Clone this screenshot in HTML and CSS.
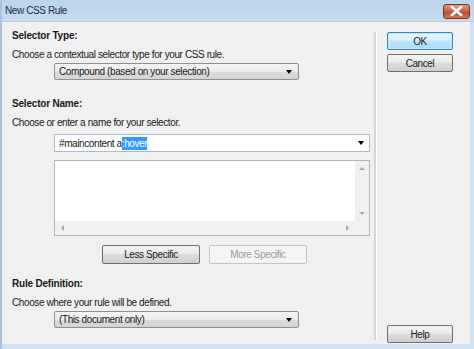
FILE: index.html
```html
<!DOCTYPE html>
<html>
<head>
<meta charset="utf-8">
<link rel="stylesheet" href="styles.css">
</head>
<body>
<div class="window">
  <div class="titlebar">
    <span class="title">New CSS Rule</span>
    <span class="close"><svg width="13" height="10" viewBox="0 0 13 10"><path d="M2 1 L11 9 M11 1 L2 9" stroke="#fff" stroke-width="2.6" stroke-linecap="square"/></svg></span>
  </div>
  <div class="client">
    <div class="main">
      <div class="label">Selector Type:</div>
      <div class="desc">Choose a contextual selector type for your CSS rule.</div>
      <div class="select"><span>Compound (based on your selection)</span><i class="arrow"></i></div>

      <div class="label gap-top">Selector Name:</div>
      <div class="desc">Choose or enter a name for your selector.</div>
      <div class="combo"><span>#maincontent a<span class="sel">:hover</span></span><i class="arrow"></i></div>

      <div class="listbox">
        <div class="lb-area"></div>
        <div class="vscroll"><i class="up"></i><i class="down"></i></div>
        <div class="hscroll"><i class="left"></i><i class="right"></i></div>
        <div class="corner"></div>
      </div>

      <div class="spec-row">
        <div class="btn">Less Specific</div>
        <div class="btn disabled">More Specific</div>
      </div>

      <div class="label gap-top2">Rule Definition:</div>
      <div class="desc">Choose where your rule will be defined.</div>
      <div class="select"><span>(This document only)</span><i class="arrow"></i></div>
    </div>
    <div class="sep"></div>
    <div class="side">
      <div class="btn default">OK</div>
      <div class="btn">Cancel</div>
      <div class="spacer"></div>
      <div class="btn">Help</div>
    </div>
  </div>
</div>
</body>
</html>
```

FILE: styles.css
```css
html, body {
  margin: 0;
  padding: 0;
}
body {
  width: 474px;
  height: 349px;
  overflow: hidden;
  background: #cfe2f3;
  font-family: "Liberation Sans", Arial, sans-serif;
  font-size: 10px;
  letter-spacing: -0.4px;
  color: #1a1a1a;
}
.window {
  width: 474px;
  height: 349px;
  display: flex;
  flex-direction: column;
  box-sizing: border-box;
  border-left: 2px solid #a9c3dd;
}
.titlebar {
  height: 22px;
  flex: none;
  display: flex;
  align-items: center;
  justify-content: space-between;
  background: linear-gradient(#bcd3ea, #c3d8ee 60%, #c8dcef);
  padding: 0 4px 0 3px;
  border-bottom: 1px solid #b6cbe0;
  box-sizing: border-box;
}
.title {
  font-size: 10px;
  color: #1e2a3a;
  letter-spacing: -0.4px;
}
.close {
  width: 27px;
  height: 15px;
  margin-top: 1px;
  border: 1px solid #7a3326;
  border-radius: 3px;
  box-sizing: border-box;
  background: linear-gradient(#dd9a82, #c8603f 50%, #b84a2b 55%, #d47a52);
  display: flex;
  align-items: center;
  justify-content: center;
}
.client {
  flex: 1;
  display: flex;
  background: #f0f0f0;
  margin: 0 4px 5px 0;
  padding-top: 7px;
}
.main {
  width: 372px;
  padding-left: 10px;
  display: flex;
  flex-direction: column;
  align-items: flex-start;
  flex: none;
  box-sizing: border-box;
}
.label {
  font-weight: bold;
  font-size: 10px;
  height: 14px;
  line-height: 14px;
  letter-spacing: -0.2px;
}
.desc {
  height: 14px;
  line-height: 14px;
  margin-top: 5px;
}
.gap-top { margin-top: 17px; }
.gap-top2 { margin-top: 13px; }
.select {
  margin: 1px 0 0 42px;
  width: 245px;
  height: 17px;
  box-sizing: border-box;
  border: 1px solid #8e8f8f;
  border-radius: 2px;
  background: linear-gradient(#f4f4f4, #ebebeb 50%, #dddddd 51%, #d4d4d4);
  display: flex;
  align-items: center;
  justify-content: space-between;
  padding: 0 6px 0 4px;
}
.arrow {
  width: 0;
  height: 0;
  border-left: 3.5px solid transparent;
  border-right: 3.5px solid transparent;
  border-top: 4px solid #000;
}
.combo {
  margin: 4px 0 0 42px;
  width: 316px;
  height: 18px;
  box-sizing: border-box;
  border: 1px solid #a6bdd6;
  background: #fff;
  display: flex;
  align-items: center;
  justify-content: space-between;
  padding: 0 5px 0 4px;
}
.sel {
  background: #3399ff;
  color: #fff;
  padding: 1px 0;
}
.listbox {
  margin: 8px 0 0 42px;
  width: 316px;
  height: 76px;
  box-sizing: border-box;
  border: 1px solid #b5b5b5;
  display: grid;
  grid-template-columns: 1fr 14px;
  grid-template-rows: 1fr 14px;
  background: #fff;
}
.lb-area { background: #fff; }
.vscroll {
  background: #f0f0f0;
  position: relative;
}
.hscroll {
  background: #f0f0f0;
  position: relative;
}
.corner { background: #f0f0f0; }
.vscroll i, .hscroll i {
  position: absolute;
  width: 0;
  height: 0;
}
.vscroll .up {
  top: 6px; left: 4px;
  border-left: 3px solid transparent;
  border-right: 3px solid transparent;
  border-bottom: 3px solid #a8a8a8;
}
.vscroll .down {
  bottom: 6px; left: 4px;
  border-left: 3px solid transparent;
  border-right: 3px solid transparent;
  border-top: 3px solid #a8a8a8;
}
.hscroll .left {
  left: 6px; top: 4px;
  border-top: 3px solid transparent;
  border-bottom: 3px solid transparent;
  border-right: 3px solid #a8a8a8;
}
.hscroll .right {
  right: 6px; top: 4px;
  border-top: 3px solid transparent;
  border-bottom: 3px solid transparent;
  border-left: 3px solid #a8a8a8;
}
.spec-row {
  margin: 9px 0 0 90px;
  display: flex;
  gap: 9px;
}
.btn {
  width: 98px;
  height: 19px;
  box-sizing: border-box;
  border: 1px solid #707070;
  border-radius: 2px;
  background: linear-gradient(#f2f2f2, #ebebeb 45%, #dddddd 50%, #cfcfcf);
  display: flex;
  align-items: center;
  justify-content: center;
  color: #1a1a1a;
}
.btn.disabled {
  border-color: #c4c4c4;
  background: #f4f4f4;
  color: #9a9a9a;
}
.sep {
  width: 2px;
  margin: 3px 0 4px 0;
  background: #d6d6d6;
  border-right: 1px solid #fff;
  flex: none;
}
.side {
  display: flex;
  flex-direction: column;
  padding: 3px 0 0 10px;
  gap: 4px;
  padding-bottom: 1px;
}
.side .btn {
  width: 66px;
  height: 18px;
}
.btn.default {
  border-color: #3c7fb1;
  background: linear-gradient(#eaf6fd, #d9f0fc 45%, #bee6fd 50%, #a7d9f5);
  box-shadow: inset 0 0 0 1px #bfe6fb;
}
.spacer { flex: 1; }
```
